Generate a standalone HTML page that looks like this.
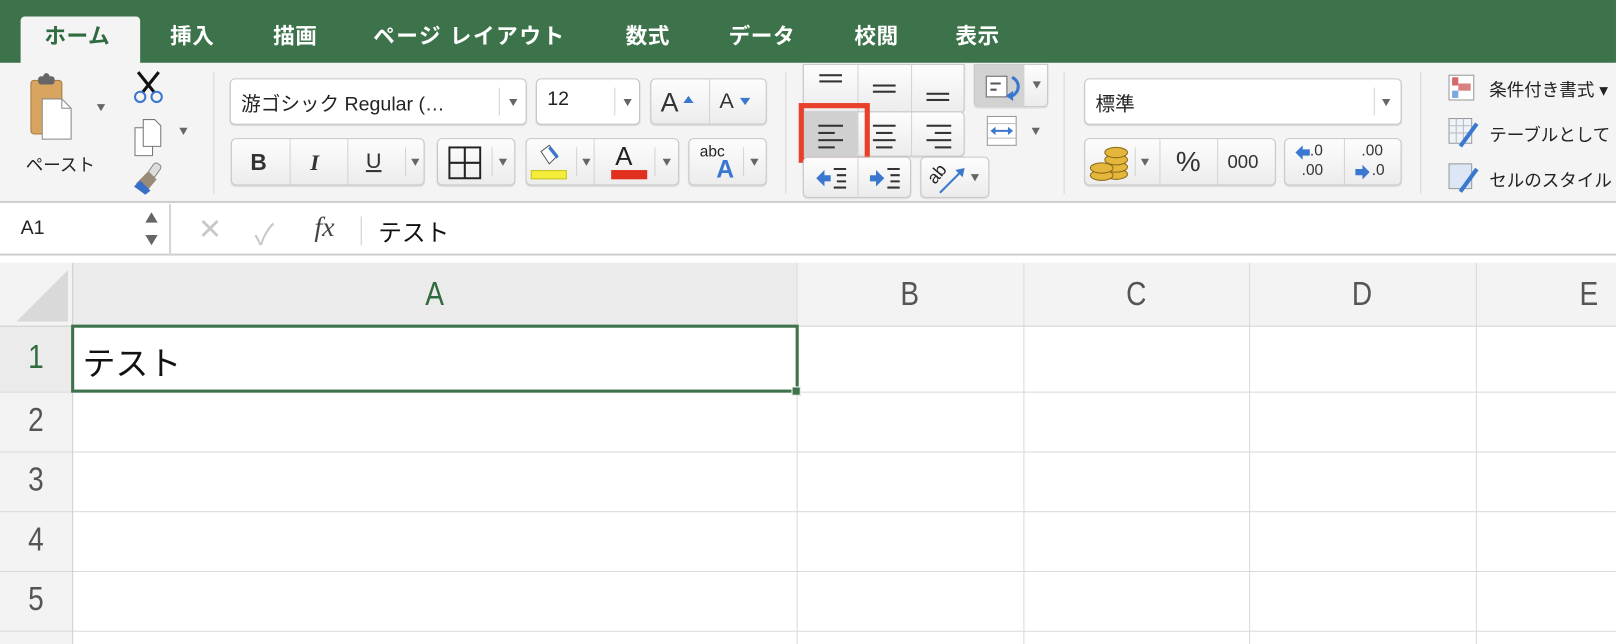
<!DOCTYPE html>
<html><head><meta charset="utf-8"><style>
*{margin:0;padding:0;box-sizing:border-box}
html,body{width:1616px;height:644px;overflow:hidden;background:#fff}
#w{position:absolute;left:0;top:0;width:1568px;height:625px;transform:scale(1.0306);transform-origin:0 0;font-family:"Liberation Sans","Noto Sans CJK JP",sans-serif;color:#222}
.a{position:absolute}
.tab{position:absolute;top:19px;font-size:21px;color:#fff;font-weight:bold;letter-spacing:0.5px}
.box{position:absolute;background:#fff;border:1px solid #c6c6c6;border-radius:5px;box-shadow:0 1px 1px rgba(0,0,0,.12)}
.btn{position:absolute;background:linear-gradient(#fdfdfd,#ececec);border:1px solid #c6c6c6;border-radius:5px;box-shadow:0 1px 1px rgba(0,0,0,.1)}
.dv{position:absolute;top:0;bottom:0;width:1px;background:#d3d3d3}
.ar{position:absolute;width:0;height:0;border-left:4px solid transparent;border-right:4px solid transparent;border-top:7px solid #666}
.sep{position:absolute;width:1px;background:#d6d6d6}
.ln{position:absolute;height:2px;background:#333}
.hl{position:absolute;left:0;width:1568px;height:1px;background:#dadada}
.vl{position:absolute;top:255px;width:1px;height:370px;background:#dadada}
.ch{position:absolute;top:255px;height:61px;font-size:32px;color:#555;text-align:center;line-height:61px;font-family:"Liberation Sans Narrow","Liberation Sans",sans-serif}
.ch span,.rh span{display:inline-block;transform:scaleX(0.85)}
.rh{position:absolute;left:0;width:70px;font-size:32px;color:#555;text-align:center;font-family:"Liberation Sans Narrow","Liberation Sans",sans-serif}
.st{position:absolute;left:1445px;font-size:17px;color:#222}
</style></head><body><div id="w">
<div class="a" style="left:0;top:0;width:1568px;height:61px;background:#3d734b"></div>
<div class="a" style="left:20px;top:16px;width:116px;height:46px;background:#f4f4f4;border-radius:4px 4px 0 0"></div>
<div class="tab" style="left:43px;color:#2f6b3f">ホーム</div>
<div class="tab" style="left:165px">挿入</div>
<div class="tab" style="left:265px">描画</div>
<div class="tab" style="left:362px;letter-spacing:1.5px">ページ レイアウト</div>
<div class="tab" style="left:607px">数式</div>
<div class="tab" style="left:707px">データ</div>
<div class="tab" style="left:829px">校閲</div>
<div class="tab" style="left:927px">表示</div>
<div class="a" style="left:0;top:61px;width:1568px;height:136px;background:#f4f4f4;border-bottom:2px solid #cfcfcf"></div>
<svg class="a" style="left:26px;top:70px" width="52" height="68"><rect x="4" y="8" width="30" height="52" rx="3" fill="#d7a55f" stroke="#a77c3c"/><rect x="11" y="4" width="16" height="8" rx="3" fill="#666"/><circle cx="19" cy="4" r="3" fill="#666"/><path d="M15 26h19l9 9v30H15z" fill="#fff" stroke="#888"/><path d="M34 26v9h9" fill="none" stroke="#888"/></svg>
<div class="ar" style="left:94px;top:101px"></div>
<div class="a" style="left:25px;top:146px;font-size:17px">ペースト</div>
<svg class="a" style="left:128px;top:68px" width="32" height="34"><path d="M6 2L22 22M26 2L10 22" stroke="#111" stroke-width="3"/><circle cx="8" cy="26" r="5" fill="none" stroke="#3a78d0" stroke-width="2"/><circle cx="24" cy="26" r="5" fill="none" stroke="#3a78d0" stroke-width="2"/></svg>
<svg class="a" style="left:130px;top:114px" width="30" height="38"><path d="M1 10h12l5 5v22H1z" fill="#fff" stroke="#777"/><path d="M9 2h11l6 6v20H9z" fill="#fff" stroke="#777"/></svg>
<div class="ar" style="left:174px;top:124px"></div>
<svg class="a" style="left:128px;top:156px" width="34" height="34"><rect x="18" y="2" width="8" height="14" rx="3" transform="rotate(35 22 9)" fill="#ddd" stroke="#888"/><path d="M4 22l12-12 8 8-10 12z" fill="#9a8b78"/><path d="M2 25l6-6 10 10-5 4z" fill="#3a6fc8"/></svg>
<div class="sep" style="left:207px;top:70px;height:118px"></div>
<div class="box" style="left:223px;top:76px;width:288px;height:45px"><div class="a" style="left:10px;top:9px;font-size:19px">游ゴシック Regular (…</div><div class="dv" style="left:260px;top:8px;bottom:8px"></div><div class="ar" style="left:270px;top:19px"></div></div>
<div class="box" style="left:520px;top:76px;width:101px;height:45px"><div class="a" style="left:10px;top:9px;font-size:19px">12</div><div class="dv" style="left:75px;top:8px;bottom:8px"></div><div class="ar" style="left:84px;top:19px"></div></div>
<div class="btn" style="left:631px;top:76px;width:113px;height:45px"><div class="dv" style="left:56px"></div><div class="a" style="left:9px;top:7px;font-size:26px;color:#333">A</div><div class="a" style="left:31px;top:16px;border-left:5px solid transparent;border-right:5px solid transparent;border-bottom:7px solid #3a78d0"></div><div class="a" style="left:66px;top:10px;font-size:21px;color:#333">A</div><div class="a" style="left:86px;top:18px;border-left:5px solid transparent;border-right:5px solid transparent;border-top:7px solid #3a78d0"></div></div>
<div class="btn" style="left:224px;top:134px;width:188px;height:46px"><div class="dv" style="left:56px"></div><div class="dv" style="left:112px"></div><div class="dv" style="left:168px;top:8px;bottom:8px"></div><div class="a" style="left:18px;top:10px;font-size:22px;font-weight:bold;color:#333">B</div><div class="a" style="left:76px;top:10px;font-size:22px;font-style:italic;font-family:'Liberation Serif',serif;font-weight:bold;color:#333">I</div><div class="a" style="left:130px;top:10px;font-size:21px;color:#333;text-decoration:underline">U</div><div class="ar" style="left:174px;top:19px"></div></div>
<div class="btn" style="left:424px;top:134px;width:76px;height:46px"><svg class="a" style="left:10px;top:7px" width="32" height="32"><rect x="1" y="1" width="30" height="30" fill="none" stroke="#222" stroke-width="2"/><path d="M16 1v30M1 16h30" stroke="#222" stroke-width="2"/></svg><div class="dv" style="left:52px;top:8px;bottom:8px"></div><div class="ar" style="left:59px;top:19px"></div></div>
<div class="btn" style="left:510px;top:134px;width:149px;height:46px"><svg class="a" style="left:6px;top:4px" width="36" height="24"><path d="M8 8l8-6 8 10-8 8z" fill="#fff" stroke="#555"/><path d="M16 4l8 10" stroke="#3a78d0" stroke-width="3"/></svg><div class="a" style="left:4px;top:30px;width:35px;height:9px;background:#f4ee3a;border:1px solid #c8c020"></div><div class="dv" style="left:48px;top:8px;bottom:8px"></div><div class="ar" style="left:54px;top:19px"></div><div class="dv" style="left:65px"></div><div class="a" style="left:86px;top:3px;font-size:25px;color:#222">A</div><div class="a" style="left:82px;top:30px;width:35px;height:9px;background:#e2301f"></div><div class="dv" style="left:124px;top:8px;bottom:8px"></div><div class="ar" style="left:132px;top:19px"></div></div>
<div class="btn" style="left:668px;top:134px;width:76px;height:46px"><div class="a" style="left:10px;top:4px;font-size:15px;color:#222">abc</div><div class="a" style="left:26px;top:16px;font-size:24px;font-weight:bold;color:#3a78d0">A</div><div class="dv" style="left:52px;top:8px;bottom:8px"></div><div class="ar" style="left:59px;top:19px"></div></div>
<div class="sep" style="left:762px;top:70px;height:118px"></div>
<div class="btn" style="left:779px;top:62px;width:157px;height:48px;border-radius:0 0 5px 5px"><div class="dv" style="left:52px"></div><div class="dv" style="left:104px"></div><div class="ln" style="left:15px;top:9px;width:22px"></div><div class="ln" style="left:15px;top:15px;width:22px"></div><div class="ln" style="left:67px;top:19px;width:22px"></div><div class="ln" style="left:67px;top:25px;width:22px"></div><div class="ln" style="left:119px;top:27px;width:22px"></div><div class="ln" style="left:119px;top:33px;width:22px"></div></div>
<div class="btn" style="left:945px;top:62px;width:72px;height:42px;border-radius:0 0 5px 5px"><div class="a" style="left:0;top:0;width:48px;height:41px;background:#d2d2d2"></div><svg class="a" style="left:10px;top:8px" width="36" height="28"><rect x="1" y="3" width="20" height="20" fill="#fff" stroke="#666"/><path d="M5 10h10M5 16h6" stroke="#555" stroke-width="2"/><path d="M26 4c8 4 8 14 0 18" fill="none" stroke="#3a78d0" stroke-width="3"/><path d="M20 22l7-5v10z" fill="#3a78d0"/></svg><div class="ar" style="left:56px;top:16px"></div></div>
<div class="btn" style="left:779px;top:108px;width:157px;height:44px"><div class="dv" style="left:52px"></div><div class="dv" style="left:104px"></div><div class="a" style="left:0;top:0;width:52px;height:43px;background:#d0d0d0"></div><div class="ln" style="left:14px;top:12px;width:24px"></div><div class="ln" style="left:14px;top:19px;width:16px"></div><div class="ln" style="left:14px;top:26px;width:24px"></div><div class="ln" style="left:14px;top:33px;width:16px"></div><div class="ln" style="left:67px;top:12px;width:22px"></div><div class="ln" style="left:70px;top:19px;width:16px"></div><div class="ln" style="left:67px;top:26px;width:22px"></div><div class="ln" style="left:70px;top:33px;width:16px"></div><div class="ln" style="left:119px;top:12px;width:24px"></div><div class="ln" style="left:127px;top:19px;width:16px"></div><div class="ln" style="left:119px;top:26px;width:24px"></div><div class="ln" style="left:127px;top:33px;width:16px"></div></div>
<div class="a" style="left:775px;top:100px;width:69px;height:58px;border:5px solid #e8402a"></div>
<svg class="a" style="left:957px;top:112px" width="32" height="30"><rect x="1" y="1" width="28" height="28" fill="#fff" stroke="#999"/><path d="M1 8h28M1 22h28" stroke="#bbb"/><path d="M6 15h18" stroke="#3a78d0" stroke-width="2"/><path d="M4 15l5-4v8zM26 15l-5-4v8z" fill="#3a78d0"/></svg>
<div class="ar" style="left:1001px;top:124px"></div>
<div class="btn" style="left:779px;top:152px;width:105px;height:40px"><div class="dv" style="left:52px"></div><svg class="a" style="left:12px;top:8px" width="30" height="24"><path d="M0 12l8-8v5h6v6H8v5z" fill="#3a78d0"/><path d="M17 3h12M20 9h9M20 15h9M17 21h12" stroke="#333" stroke-width="2"/></svg><svg class="a" style="left:64px;top:8px" width="30" height="24"><path d="M14 12l-8-8v5H0v6h6v5z" fill="#3a78d0"/><path d="M17 3h12M20 9h9M20 15h9M17 21h12" stroke="#333" stroke-width="2"/></svg></div>
<div class="btn" style="left:893px;top:152px;width:67px;height:40px"><div class="a" style="left:6px;top:6px;font-size:17px;transform:rotate(-50deg);color:#222">ab</div><svg class="a" style="left:16px;top:6px" width="28" height="30"><path d="M2 28L24 6" stroke="#3a78d0" stroke-width="2"/><path d="M26 4l-9 2 7 7z" fill="#3a78d0"/></svg><div class="ar" style="left:48px;top:16px"></div></div>
<div class="sep" style="left:1032px;top:70px;height:118px"></div>
<div class="box" style="left:1052px;top:76px;width:308px;height:45px"><div class="a" style="left:10px;top:9px;font-size:19px">標準</div><div class="dv" style="left:280px;top:8px;bottom:8px"></div><div class="ar" style="left:288px;top:19px"></div></div>
<div class="btn" style="left:1052px;top:134px;width:186px;height:46px"><svg class="a" style="left:4px;top:4px" width="40" height="38"><g fill="#e5b63c" stroke="#8b6a1a"><ellipse cx="26" cy="30" rx="11" ry="5"/><ellipse cx="26" cy="23" rx="11" ry="5"/><ellipse cx="26" cy="16" rx="11" ry="5"/><ellipse cx="26" cy="9" rx="11" ry="5"/><ellipse cx="12" cy="31" rx="11" ry="5"/><ellipse cx="12" cy="24" rx="11" ry="5"/></g></svg><div class="dv" style="left:48px;top:8px;bottom:8px"></div><div class="ar" style="left:54px;top:19px"></div><div class="dv" style="left:72px"></div><div class="a" style="left:88px;top:7px;font-size:27px;color:#333">%</div><div class="dv" style="left:128px"></div><div class="a" style="left:138px;top:12px;font-size:18px;color:#333">000</div></div>
<div class="btn" style="left:1246px;top:134px;width:114px;height:46px"><div class="dv" style="left:57px"></div><svg class="a" style="left:10px;top:6px" width="14" height="14"><path d="M0 7l7-7v4h7v6H7v4z" fill="#3a78d0"/></svg><div class="a" style="left:24px;top:3px;font-size:15px;color:#333">.0</div><div class="a" style="left:16px;top:22px;font-size:15px;color:#333">.00</div><div class="a" style="left:74px;top:3px;font-size:15px;color:#333">.00</div><svg class="a" style="left:68px;top:25px" width="14" height="14"><path d="M14 7l-7-7v4H0v6h7v4z" fill="#3a78d0"/></svg><div class="a" style="left:84px;top:22px;font-size:15px;color:#333">.0</div></div>
<div class="sep" style="left:1378px;top:70px;height:118px"></div>
<svg class="a" style="left:1405px;top:72px" width="26" height="26"><rect x="1" y="1" width="24" height="24" fill="#fff" stroke="#999"/><rect x="4" y="3" width="6" height="8" fill="#d46a6a"/><rect x="10" y="9" width="12" height="7" fill="#d98080"/><rect x="4" y="16" width="6" height="7" fill="#7aa7e0"/></svg>
<div class="st" style="top:73px">条件付き書式 ▾</div>
<svg class="a" style="left:1405px;top:114px" width="30" height="34"><rect x="1" y="1" width="22" height="24" fill="#eef2fa" stroke="#999"/><path d="M1 8h22M1 15h22M8 1v24M15 1v24" stroke="#bbb"/><path d="M28 6L12 28" stroke="#3a78d0" stroke-width="4"/></svg>
<div class="st" style="top:117px">テーブルとして</div>
<svg class="a" style="left:1405px;top:158px" width="30" height="34"><rect x="1" y="1" width="22" height="24" fill="#dde6f4" stroke="#999"/><path d="M28 6L12 28" stroke="#3a78d0" stroke-width="4"/></svg>
<div class="st" style="top:161px">セルのスタイル</div>
<div class="a" style="left:0;top:198px;width:1568px;height:50px;background:#fff;border-bottom:2px solid #cfcfcf"></div>
<div class="a" style="left:0;top:198px;width:166px;height:50px;border-right:2px solid #d6d6d6"></div>
<div class="a" style="left:20px;top:211px;font-size:19px">A1</div>
<div class="a" style="left:141px;top:206px;border-left:6px solid transparent;border-right:6px solid transparent;border-bottom:10px solid #666"></div>
<div class="a" style="left:141px;top:228px;border-left:6px solid transparent;border-right:6px solid transparent;border-top:10px solid #666"></div>
<div class="a" style="left:192px;top:206px;font-size:28px;color:#c8c8c8">✕</div>
<div class="a" style="left:247px;top:206px;font-size:28px;color:#c8c8c8">✓</div>
<div class="a" style="left:305px;top:205px;font-size:27px;font-style:italic;font-family:'Liberation Serif',serif;color:#444">fx</div>
<div class="a" style="left:350px;top:210px;width:1px;height:28px;background:#ccc"></div>
<div class="a" style="left:367px;top:207px;font-size:23px;color:#111">テスト</div>
<div class="a" style="left:0;top:255px;width:1568px;height:61px;background:#f3f3f3"></div>
<div class="a" style="left:0;top:316px;width:70px;height:309px;background:#f3f3f3"></div>
<div class="a" style="left:70px;top:255px;width:703px;height:61px;background:#ebebeb"></div>
<div class="a" style="left:0;top:316px;width:70px;height:64px;background:#ebebeb"></div>
<svg class="a" style="left:16px;top:262px" width="52" height="52"><path d="M50 0V50H0z" fill="#d9d9d9"/></svg>
<div class="hl" style="top:316px;background:#cfcfcf"></div>
<div class="hl" style="top:380px"></div><div class="hl" style="top:438px"></div><div class="hl" style="top:496px"></div><div class="hl" style="top:554px"></div><div class="hl" style="top:612px"></div>
<div class="vl" style="left:70px;background:#cfcfcf"></div><div class="vl" style="left:773px"></div><div class="vl" style="left:993px"></div><div class="vl" style="left:1212px"></div><div class="vl" style="left:1432px"></div>
<div class="ch" style="left:70px;width:703px;color:#2f6b3f"><span>A</span></div>
<div class="ch" style="left:773px;width:220px"><span>B</span></div>
<div class="ch" style="left:993px;width:219px"><span>C</span></div>
<div class="ch" style="left:1212px;width:220px"><span>D</span></div>
<div class="ch" style="left:1432px;width:220px"><span>E</span></div>
<div class="rh" style="top:328px;color:#2f6b3f"><span>1</span></div>
<div class="rh" style="top:389px"><span>2</span></div>
<div class="rh" style="top:447px"><span>3</span></div>
<div class="rh" style="top:505px"><span>4</span></div>
<div class="rh" style="top:563px"><span>5</span></div>
<div class="a" style="left:69px;top:315px;width:706px;height:66px;border:3px solid #3d734b"></div>
<div class="a" style="left:768px;top:375px;width:9px;height:9px;background:#3d734b;border:1px solid #fff"></div>
<div class="a" style="left:80px;top:328px;font-size:32px;color:#111">テスト</div>
</div></body></html>
